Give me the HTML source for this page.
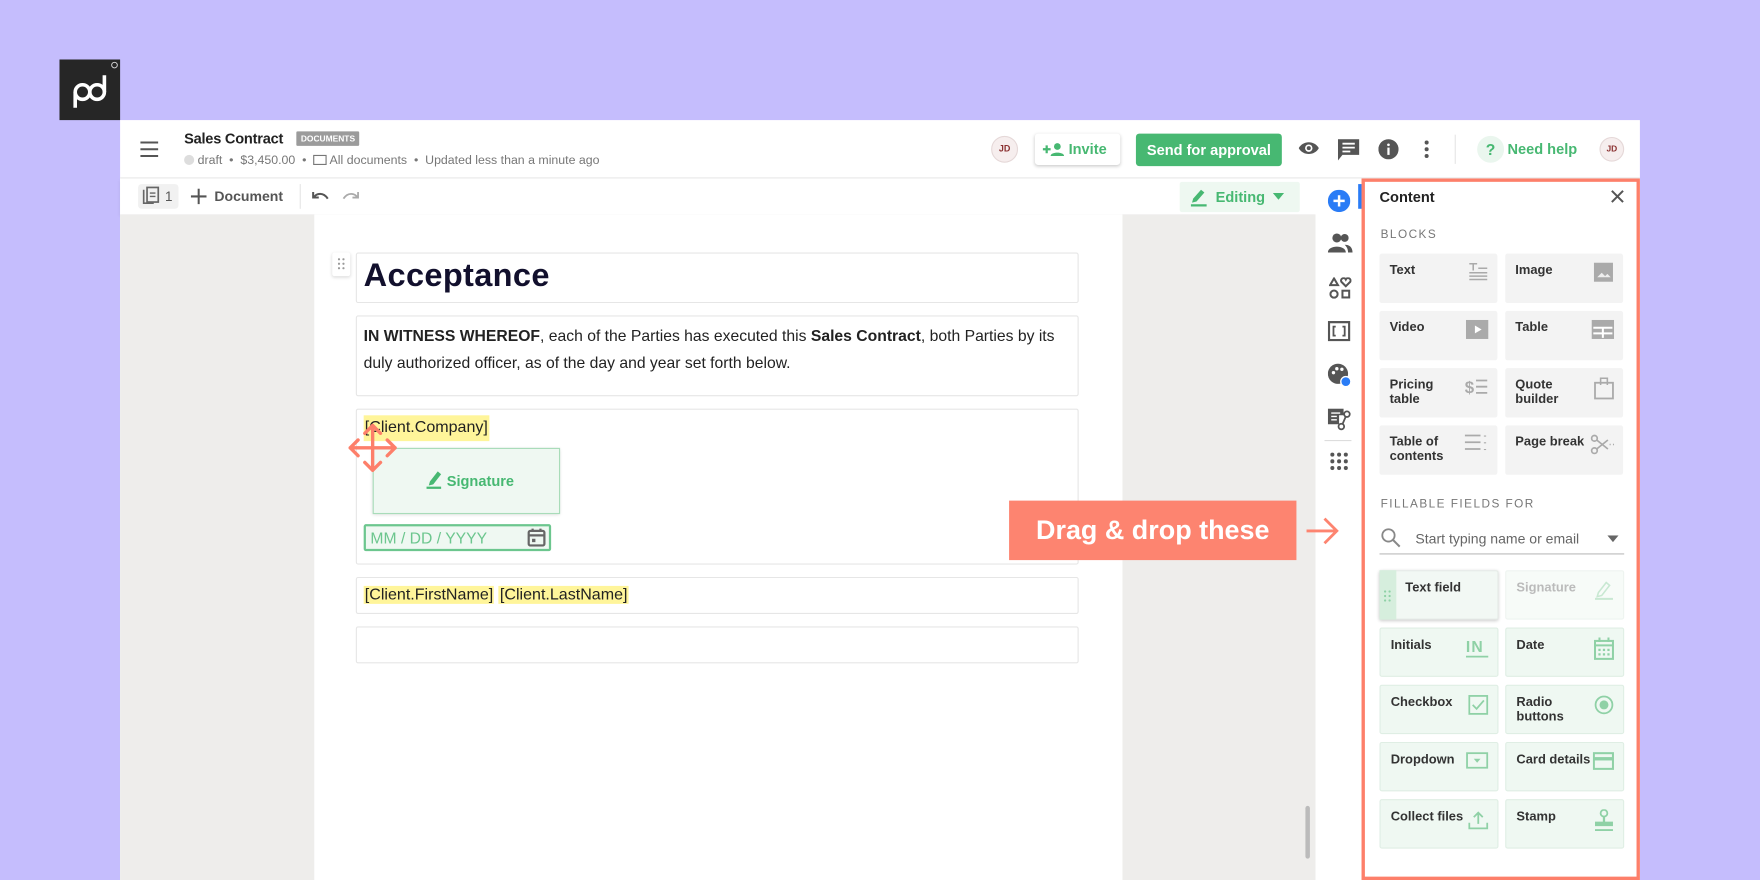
<!DOCTYPE html>
<html><head><meta charset="utf-8"><style>
*{box-sizing:border-box;margin:0;padding:0}
html,body{width:1760px;height:880px;overflow:hidden;background:#c5bdfd;font-family:"Liberation Sans",sans-serif}
#s{position:absolute;left:0;top:0;width:1568px;height:784px;transform:scale(1.12245);transform-origin:0 0}
.a{position:absolute}
.blk{position:absolute;width:105px;height:44px;background:#f3f3f3;border-radius:2px;font-size:11.5px;font-weight:bold;color:#333;padding:9px 0 0 9px;line-height:13px}
.fld{position:absolute;width:106px;height:44px;background:#eff8f2;border:1px solid #dfeee4;border-radius:2px;font-size:11.5px;font-weight:bold;color:#333;padding:9px 0 0 9px;line-height:13px}
.blk svg,.fld svg{position:absolute;right:8px;top:8px}
.box{position:absolute;left:317px;width:644px;border:1px solid #e6e6e6;border-radius:2px;background:#fff}
.hl{background:#fff59a}
</style></head><body><div id="s">
<!-- logo -->
<div class="a" style="left:53px;top:53px;width:54px;height:54px;background:#262626">
<svg width="54" height="54"><g fill="none" stroke="#fff" stroke-width="3.2"><circle cx="20.5" cy="29" r="6.5"/><path d="M14 29v14"/><circle cx="33.5" cy="29" r="6.5"/><path d="M40 29V14"/></g><circle cx="49" cy="5" r="2.5" fill="none" stroke="#ddd" stroke-width="0.8"/></svg>
</div>
<!-- app window -->
<div class="a" style="left:107px;top:107px;width:1354px;height:677px;background:#fff"></div>
<!-- header -->
<div class="a" style="left:107px;top:158px;width:1354px;height:1px;background:#e8e8e8"></div>
<svg class="a" style="left:125px;top:126px" width="16" height="14"><path d="M0 1h16M0 7h16M0 13h16" stroke="#555" stroke-width="1.8"/></svg>
<div class="a" style="left:164px;top:116px;font-size:13px;font-weight:bold;color:#222;letter-spacing:-0.2px">Sales Contract</div>
<div class="a" style="left:264px;top:117px;height:13px;padding:0 4px;background:#9b9b9b;color:#fff;font-size:7.5px;font-weight:bold;line-height:13px;border-radius:1px">DOCUMENTS</div>
<div class="a" style="left:164px;top:137px;font-size:11px;color:#777;white-space:nowrap"><span style="display:inline-block;width:9px;height:9px;border-radius:50%;background:#ddd;vertical-align:-1px"></span> draft &nbsp;•&nbsp; $3,450.00 &nbsp;•&nbsp; <span style="display:inline-block;width:12px;height:9px;border:1px solid #777;vertical-align:-1px"></span> All documents &nbsp;•&nbsp; Updated less than a minute ago</div>
<div class="a" style="left:883px;top:121px;width:24px;height:24px;border-radius:50%;background:#f6eeee;border:1px solid #e5d8d8;font-size:8px;color:#8a3030;text-align:center;line-height:22px;font-weight:bold">JD</div>
<div class="a" style="left:922px;top:119px;width:76px;height:28px;border-radius:3px;box-shadow:0 1px 3px rgba(0,0,0,.2);color:#47b872;font-size:13px;font-weight:bold;line-height:28px;padding-left:30px">Invite
<svg class="a" style="left:7px;top:8px" width="19" height="12"><path d="M0 6h7M3.5 2.5v7" stroke="#47b872" stroke-width="2"/><circle cx="13" cy="3.5" r="3" fill="#47b872"/><path d="M7 12c0-4 12-4 12 0z" fill="#47b872"/></svg></div>
<div class="a" style="left:1012px;top:119px;width:130px;height:29px;border-radius:3px;background:#47b872;color:#fff;font-size:13px;font-weight:bold;line-height:29px;text-align:center">Send for approval</div>
<svg class="a" style="left:1157px;top:125px" width="18" height="14"><path d="M0 7C4 0 14 0 18 7C14 14 4 14 0 7z" fill="#555"/><circle cx="9" cy="7" r="3.3" fill="#fff"/><circle cx="9" cy="7" r="1.8" fill="#555"/></svg>
<svg class="a" style="left:1192px;top:124px" width="19" height="19"><path d="M0 0h19v14H4l-4 5z" fill="#555"/><path d="M4 4h11M4 7.5h11M4 11h7" stroke="#fff" stroke-width="1.6"/></svg>
<svg class="a" style="left:1228px;top:124px" width="18" height="18"><circle cx="9" cy="9" r="9" fill="#555"/><rect x="8" y="7.5" width="2" height="6.5" fill="#fff"/><circle cx="9" cy="5" r="1.2" fill="#fff"/></svg>
<svg class="a" style="left:1268px;top:124px" width="6" height="18"><circle cx="3" cy="3" r="1.8" fill="#555"/><circle cx="3" cy="9" r="1.8" fill="#555"/><circle cx="3" cy="15" r="1.8" fill="#555"/></svg>
<div class="a" style="left:1296px;top:120px;width:1px;height:26px;background:#e5e5e5"></div>
<div class="a" style="left:1316px;top:121px;width:24px;height:24px;border-radius:50%;background:#eaf6ee;color:#47b872;font-size:14px;font-weight:bold;text-align:center;line-height:24px">?</div>
<div class="a" style="left:1343px;top:125px;color:#47b872;font-size:13px;font-weight:bold">Need help</div>
<div class="a" style="left:1425px;top:122px;width:22px;height:22px;border-radius:50%;background:#f6eeee;border:1px solid #e5d8d8;font-size:7.5px;color:#8a3030;text-align:center;line-height:20px;font-weight:bold">JD</div>
<!-- toolbar -->
<div class="a" style="left:107px;top:159px;width:1065px;height:32px;background:#fff;box-shadow:0 2px 3px rgba(0,0,0,.08)"></div>
<div class="a" style="left:123px;top:164px;width:36px;height:22px;background:#f1f1f1;border-radius:3px"></div>
<svg class="a" style="left:127px;top:166px" width="16" height="18"><path d="M1 3v12h9" fill="none" stroke="#666" stroke-width="1.5"/><rect x="4" y="1" width="10" height="13" fill="none" stroke="#666" stroke-width="1.5"/><path d="M6.5 6h5M6.5 9h5" stroke="#666" stroke-width="1.2"/></svg>
<div class="a" style="left:147px;top:168px;font-size:12px;color:#555">1</div>
<svg class="a" style="left:170px;top:168px" width="14" height="14"><path d="M7 0v14M0 7h14" stroke="#555" stroke-width="1.8"/></svg>
<div class="a" style="left:191px;top:168px;font-size:12.5px;font-weight:bold;color:#555">Document</div>
<div class="a" style="left:267px;top:164px;width:1px;height:22px;background:#e5e5e5"></div>
<svg class="a" style="left:276px;top:169px" width="18" height="12"><path d="M3 2v5h5M3.5 7C6 3 12 2 16 8" fill="none" stroke="#555" stroke-width="1.8"/></svg>
<svg class="a" style="left:304px;top:169px" width="18" height="12"><path d="M15 2v5h-5M14.5 7C12 3 6 2 2 8" fill="none" stroke="#aaa" stroke-width="1.6"/></svg>
<div class="a" style="left:1051px;top:162px;width:107px;height:27px;background:#eef8f1;border-radius:2px"></div>
<svg class="a" style="left:1060px;top:167px" width="16" height="17"><path d="M3 10l7-8 3 2.5-7 8-4 1z" fill="#47b872"/><path d="M1 16h14" stroke="#47b872" stroke-width="2"/></svg>
<div class="a" style="left:1083px;top:168px;font-size:13px;font-weight:bold;color:#47b872">Editing</div>
<svg class="a" style="left:1134px;top:172px" width="10" height="6"><path d="M0 0h10L5 6z" fill="#47b872"/></svg>
<!-- canvas -->
<div class="a" style="left:107px;top:191px;width:1065px;height:593px;background:#eeedeb"></div>
<div class="a" style="left:280px;top:191px;width:720px;height:593px;background:#fff"></div>
<div class="a" style="left:1163px;top:718px;width:4px;height:47px;background:#bbb;border-radius:2px"></div>
<!-- doc -->
<div class="a" style="left:296px;top:225px;width:16px;height:21px;background:#fff;box-shadow:0 1px 3px rgba(0,0,0,.15);border-radius:2px"></div>
<svg class="a" style="left:301px;top:230px" width="6" height="10"><g fill="#999"><circle cx="1" cy="1" r="1"/><circle cx="5" cy="1" r="1"/><circle cx="1" cy="5" r="1"/><circle cx="5" cy="5" r="1"/><circle cx="1" cy="9" r="1"/><circle cx="5" cy="9" r="1"/></g></svg>
<div class="box" style="top:225px;height:45px"></div>
<div class="a" style="left:324px;top:230px;font-size:29px;font-weight:bold;color:#12102d;letter-spacing:0.3px">Acceptance</div>
<div class="box" style="top:281px;height:72px"></div>
<div class="a" style="left:324px;top:288px;width:630px;font-size:14px;line-height:23.5px;color:#222;white-space:nowrap"><b>IN WITNESS WHEREOF</b>, each of the Parties has executed this <b>Sales Contract</b>, both Parties by its<br>duly authorized officer, as of the day and year set forth below.</div>
<div class="box" style="top:364px;height:139px"></div>
<div class="a hl" style="left:324px;top:370px;height:23px;padding:0 1px;font-size:14.3px;line-height:23px;color:#222">[Client.Company]</div>
<div class="a" style="left:332px;top:399px;width:167px;height:59px;background:#eff8f2;border:1px solid #a8dcb9;box-shadow:0 1px 3px rgba(0,0,0,.15)"></div>
<svg class="a" style="left:379px;top:418px" width="18" height="18"><path d="M4 11l7-9 3 2.5-7 9-4 1z" fill="#47b872"/><path d="M1 16.5h13" stroke="#47b872" stroke-width="2"/></svg>
<div class="a" style="left:398px;top:421px;font-size:13px;font-weight:bold;color:#47b872">Signature</div>
<svg class="a" style="left:309px;top:376px" width="46" height="46"><g fill="none" stroke="#fd7f6a" stroke-width="3" stroke-linecap="round" stroke-linejoin="round"><path d="M23 3v40M3 23h40M16 10l7-7 7 7M16 36l7 7 7-7M10 16l-7 7 7 7M36 16l7 7-7 7"/></g></svg>
<div class="a" style="left:324px;top:467px;width:167px;height:24px;background:#eff8f2;border:2px solid #6cc68e;border-radius:2px"></div>
<div class="a" style="left:330px;top:471px;font-size:14px;color:#6cc68e">MM / DD / YYYY</div>
<svg class="a" style="left:470px;top:470px" width="16" height="17"><rect x="1" y="3" width="14" height="13" rx="1.5" fill="none" stroke="#666" stroke-width="2"/><path d="M1 7h14M4.5 1v3M11.5 1v3" stroke="#666" stroke-width="2"/><rect x="4" y="10" width="3" height="3" fill="#666"/></svg>
<div class="box" style="top:514px;height:33px"></div>
<div class="a" style="left:324px;top:519px;font-size:14.3px;line-height:23px;color:#222"><span class="hl" style="padding:0 1px">[Client.FirstName]</span> <span class="hl" style="padding:0 1px">[Client.LastName]</span></div>
<div class="box" style="top:558px;height:33px"></div>
<!-- icon strip -->
<div class="a" style="left:1172px;top:159px;width:41px;height:625px;background:#fff"></div>
<!-- drag label -->
<div class="a" style="left:899px;top:446px;width:256px;height:53px;background:#fd8470;color:#fff;font-size:24px;font-weight:bold;text-align:center;line-height:53px">Drag &amp; drop these</div>
<svg class="a" style="left:1162px;top:460px" width="32" height="26"><path d="M2 13h27M18 2l11 11-11 11" fill="none" stroke="#fd8470" stroke-width="2.5"/></svg>
<div class="a" style="left:1210px;top:164px;width:3px;height:22px;background:#2a7cf6"></div>
<svg class="a" style="left:1183px;top:169px" width="20" height="20"><circle cx="10" cy="10" r="10" fill="#2a7cf6"/><path d="M10 5v10M5 10h10" stroke="#fff" stroke-width="2.2"/></svg>
<svg class="a" style="left:1183px;top:207px" width="22" height="18"><circle cx="8" cy="5" r="4" fill="#555"/><circle cx="15" cy="5" r="3.5" fill="#555"/><path d="M0 18c0-7 16-7 16 0z" fill="#555"/><path d="M15 11c4 0 7 2 7 7h-4c0-3-1-5-3-7z" fill="#555"/></svg>
<svg class="a" style="left:1184px;top:247px" width="20" height="20"><g fill="none" stroke="#555" stroke-width="1.8"><path d="M4.5 1L8 7H1z"/><path d="M15 8l-4-4a2 2 0 0 1 4-2a2 2 0 0 1 4 2z"/><circle cx="4.5" cy="15" r="3.2"/><rect x="12" y="12" width="6" height="6"/></g></svg>
<svg class="a" style="left:1183px;top:286px" width="20" height="18"><rect x="1" y="1" width="18" height="16" fill="none" stroke="#555" stroke-width="2"/><path d="M7 5H5v8h2M13 5h2v8h-2" fill="none" stroke="#555" stroke-width="1.6"/></svg>
<svg class="a" style="left:1183px;top:324px" width="22" height="22"><circle cx="9" cy="9" r="9" fill="#555"/><circle cx="5" cy="8" r="1.5" fill="#fff"/><circle cx="8" cy="4.5" r="1.5" fill="#fff"/><circle cx="12.5" cy="5" r="1.5" fill="#fff"/><circle cx="16" cy="16" r="4.5" fill="#2a7cf6" stroke="#fff" stroke-width="1.2"/></svg>
<svg class="a" style="left:1183px;top:364px" width="22" height="20"><path d="M0 0h14v6h-4v8H0z" fill="#555"/><path d="M3 4h8M3 7h5M3 10h5" stroke="#fff" stroke-width="1.3"/><circle cx="17" cy="5" r="2.5" fill="none" stroke="#555" stroke-width="1.6"/><circle cx="12" cy="16" r="2.5" fill="none" stroke="#555" stroke-width="1.6"/><path d="M16 7l-3 7" stroke="#555" stroke-width="1.6"/></svg>
<div class="a" style="left:1180px;top:392px;width:24px;height:1px;background:#ddd"></div>
<svg class="a" style="left:1185px;top:403px" width="16" height="16"><g fill="#555"><circle cx="2" cy="2" r="1.8"/><circle cx="8" cy="2" r="1.8"/><circle cx="14" cy="2" r="1.8"/><circle cx="2" cy="8" r="1.8"/><circle cx="8" cy="8" r="1.8"/><circle cx="14" cy="8" r="1.8"/><circle cx="2" cy="14" r="1.8"/><circle cx="8" cy="14" r="1.8"/><circle cx="14" cy="14" r="1.8"/></g></svg>
<!-- content panel -->
<div class="a" style="left:1213px;top:159px;width:248px;height:625px;border:3px solid #fd7f6a;background:#fff"></div>
<div class="a" style="left:1229px;top:168px;font-size:13px;font-weight:bold;color:#222">Content</div>
<svg class="a" style="left:1435px;top:169px" width="12" height="12"><path d="M1 1l10 10M11 1L1 11" stroke="#555" stroke-width="1.8"/></svg>
<div class="a" style="left:1230px;top:203px;font-size:10.5px;color:#777;letter-spacing:1.3px">BLOCKS</div>
<div class="blk" style="left:1229px;top:226px">Text<svg width="18" height="16"><path d="M1 1h7M4.5 1v6M9 5h8M1 9h16M1 12h16M1 15h16" stroke="#aaa" stroke-width="1.4"/></svg></div>
<div class="blk" style="left:1341px;top:226px">Image<svg width="18" height="18"><rect width="17" height="17" fill="#aaa"/><path d="M3 13l4-4 3 3 2-2 3 3z" fill="#eee"/></svg></div>
<div class="blk" style="left:1229px;top:277px">Video<svg width="20" height="17"><rect width="20" height="17" fill="#aaa"/><path d="M8 5l6 3.5-6 3.5z" fill="#fff"/></svg></div>
<div class="blk" style="left:1341px;top:277px">Table<svg width="20" height="17"><rect width="20" height="17" fill="#aaa"/><path d="M1.5 7h17M1.5 12h17M10 7v9" stroke="#fff" stroke-width="1.8"/></svg></div>
<div class="blk" style="left:1229px;top:328px">Pricing<br>table<svg width="21" height="17"><text x="0" y="14" font-size="15" fill="#aaa" font-family="Liberation Sans">$</text><path d="M10 3h10M10 8.5h10M10 14h10" stroke="#aaa" stroke-width="1.6"/></svg></div>
<div class="blk" style="left:1341px;top:328px">Quote<br>builder<svg width="18" height="20"><rect x="1" y="5" width="16" height="14" fill="none" stroke="#aaa" stroke-width="1.6"/><path d="M6 7V1h6v6" fill="none" stroke="#aaa" stroke-width="1.4"/></svg></div>
<div class="blk" style="left:1229px;top:379px">Table of<br>contents<svg width="21" height="14"><path d="M0 1h14M0 7h14M0 13h14" stroke="#aaa" stroke-width="1.6"/><path d="M18 1v1M18 7v1M18 13v1" stroke="#aaa" stroke-width="2"/></svg></div>
<div class="blk" style="left:1341px;top:379px">Page break<svg width="21" height="18"><circle cx="3.5" cy="3.5" r="2.5" fill="none" stroke="#aaa" stroke-width="1.5"/><circle cx="3.5" cy="14.5" r="2.5" fill="none" stroke="#aaa" stroke-width="1.5"/><path d="M5.5 5l10 8M5.5 13l10-8" stroke="#aaa" stroke-width="1.5"/><path d="M17 9h1M20 9h1" stroke="#aaa" stroke-width="1.3"/></svg></div>
<div class="a" style="left:1230px;top:443px;font-size:10.5px;color:#777;letter-spacing:1.3px">FILLABLE FIELDS FOR</div>
<svg class="a" style="left:1230px;top:470px" width="18" height="18"><circle cx="7" cy="7" r="5.5" fill="none" stroke="#888" stroke-width="1.6"/><path d="M11 11l6 6" stroke="#888" stroke-width="1.8"/></svg>
<div class="a" style="left:1261px;top:473px;font-size:12.5px;color:#666">Start typing name or email</div>
<svg class="a" style="left:1432px;top:477px" width="10" height="6"><path d="M0 0h10L5 6z" fill="#666"/></svg>
<div class="a" style="left:1229px;top:493px;width:218px;height:1px;background:#bbb"></div>
<div class="fld" style="left:1229px;top:508px;background:#f2f8f4;box-shadow:0 1px 3px rgba(0,0,0,.2);padding-left:22px;border-color:#e6ece8">Text field</div>
<div class="a" style="left:1229px;top:508px;width:15px;height:44px;background:#d6eedd"></div>
<svg class="a" style="left:1233px;top:526px" width="7" height="10"><g fill="#8fd1a6"><circle cx="1" cy="1" r="1"/><circle cx="5" cy="1" r="1"/><circle cx="1" cy="5" r="1"/><circle cx="5" cy="5" r="1"/><circle cx="1" cy="9" r="1"/><circle cx="5" cy="9" r="1"/></g></svg>
<div class="fld" style="left:1341px;top:508px;background:#f7fbf8;border-color:#eef4f0;color:#bbb;font-weight:bold">Signature<svg width="18" height="18"><path d="M4 11l7-9 3 2.5-7 9-4 1z" fill="none" stroke="#c8e8d2" stroke-width="1.4"/><path d="M1 16.5h16" stroke="#c8e8d2" stroke-width="1.8"/></svg></div>
<div class="fld" style="left:1229px;top:559px">Initials<svg width="20" height="18"><text x="0" y="13" font-size="14" fill="#8fd1a6" font-family="Liberation Sans" letter-spacing="1">IN</text><path d="M0 17h20" stroke="#8fd1a6" stroke-width="1.6"/></svg></div>
<div class="fld" style="left:1341px;top:559px">Date<svg width="18" height="20"><rect x="1" y="3" width="16" height="16" fill="none" stroke="#8fd1a6" stroke-width="1.8"/><path d="M1 7h16M5 0v4M13 0v4" stroke="#8fd1a6" stroke-width="1.8"/><g fill="#8fd1a6"><rect x="4" y="10" width="2" height="2"/><rect x="8" y="10" width="2" height="2"/><rect x="12" y="10" width="2" height="2"/><rect x="4" y="14" width="2" height="2"/><rect x="8" y="14" width="2" height="2"/><rect x="12" y="14" width="2" height="2"/></g></svg></div>
<div class="fld" style="left:1229px;top:610px">Checkbox<svg width="18" height="18"><rect x="1" y="1" width="16" height="16" fill="none" stroke="#8fd1a6" stroke-width="1.6"/><path d="M4 9l3.5 3.5L14 5" fill="none" stroke="#8fd1a6" stroke-width="1.6"/></svg></div>
<div class="fld" style="left:1341px;top:610px">Radio<br>buttons<svg width="18" height="18"><circle cx="9" cy="9" r="7.5" fill="none" stroke="#8fd1a6" stroke-width="1.6"/><circle cx="9" cy="9" r="4" fill="#8fd1a6"/></svg></div>
<div class="fld" style="left:1229px;top:661px">Dropdown<svg width="20" height="15"><rect x="1" y="1" width="18" height="13" fill="none" stroke="#8fd1a6" stroke-width="1.6"/><path d="M7 6h6l-3 3.5z" fill="#8fd1a6"/></svg></div>
<div class="fld" style="left:1341px;top:661px">Card details<svg width="19" height="16"><rect x="1" y="1" width="17" height="14" fill="none" stroke="#8fd1a6" stroke-width="1.8"/><rect x="1" y="4.5" width="17" height="3" fill="#8fd1a6"/></svg></div>
<div class="fld" style="left:1229px;top:712px">Collect files<svg width="18" height="18"><path d="M9 13V3M5 7l4-4 4 4" fill="none" stroke="#8fd1a6" stroke-width="1.6"/><path d="M1 12v5h16v-5" fill="none" stroke="#8fd1a6" stroke-width="1.6"/></svg></div>
<div class="fld" style="left:1341px;top:712px">Stamp<svg width="18" height="20"><circle cx="9" cy="3.5" r="3" fill="none" stroke="#8fd1a6" stroke-width="1.6"/><path d="M9 6.5v5" stroke="#8fd1a6" stroke-width="2"/><rect x="1" y="11" width="16" height="4" fill="#8fd1a6"/><path d="M1 18.5h16" stroke="#8fd1a6" stroke-width="1.6"/></svg></div>
</div></body></html>
